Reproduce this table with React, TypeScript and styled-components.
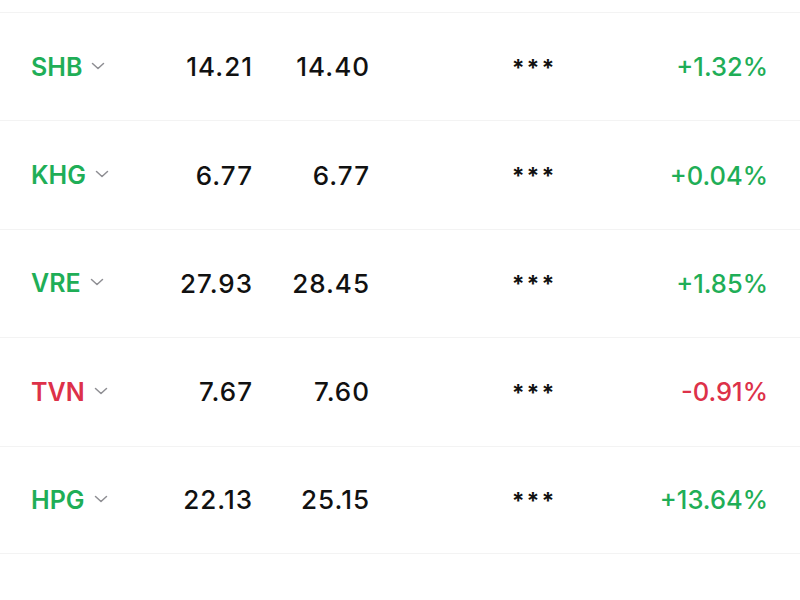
import * as React from "react";
import styled, {createGlobalStyle} from "styled-components";

const GlobalStyle = createGlobalStyle`
  html, body {
    margin: 0;
    background: #ffffff;
    font-family: Inter, "Noto Sans", "Liberation Sans", sans-serif;
  }
`;

const green = '#1fae57';
const red = '#dd3149';

interface Quote {
    symbol: string,
    open: string,
    close: string,
    change: number,
}

const quotes: Quote[] = [
    {symbol: 'SHB', open: '14.21', close: '14.40', change: 1.32},
    {symbol: 'KHG', open: '6.77', close: '6.77', change: 0.04},
    {symbol: 'VRE', open: '27.93', close: '28.45', change: 1.85},
    {symbol: 'TVN', open: '7.67', close: '7.60', change: -0.91},
    {symbol: 'HPG', open: '22.13', close: '25.15', change: 13.64},
];

const List = styled.div`
  padding-top: 12px;
`

const Row = styled.div`
  box-sizing: border-box;
  height: 108.4px;
  display: grid;
  grid-template-columns: 120px 101px 117px 330px minmax(0, 1fr);
  align-items: center;
  padding: 0 32px 0 31px;
  border-top: 1px solid #f3f3f3;

  &:last-child {
    border-bottom: 1px solid #f3f3f3;
  }
`

const Symbol = styled.div<{ $up: boolean }>`
  display: flex;
  align-items: center;
  gap: 9px;
  font-size: 25px;
  font-weight: 600;
  color: ${({$up}) => $up ? green : red};
`

const Price = styled.div`
  display: flex;
  justify-content: flex-end;
  font-size: 26px;
  font-weight: 500;
  letter-spacing: 1px;
  color: #111111;
  white-space: nowrap;
  margin-right: -1px;
`

const Hidden = styled.div`
  text-align: center;
  font-size: 23px;
  font-weight: 700;
  color: #111111;
  letter-spacing: 2px;
  position: relative;
  top: 1px;
`

const Change = styled.div<{ $up: boolean }>`
  display: flex;
  justify-content: flex-end;
  white-space: nowrap;
  font-size: 25.5px;
  font-weight: 500;
  color: ${({$up}) => $up ? green : red};
`

const Chevron = () => (
    <svg width="14" height="8" viewBox="0 0 14 8" fill="none" style={{marginTop: -2}}>
        <path d="M1.5 1.5 L7 6.5 L12.5 1.5" stroke="#8e8e93" strokeWidth="1.5" strokeLinecap="round" strokeLinejoin="round"/>
    </svg>
);

const formatChange = (v: number) => (v >= 0 ? '+' : '') + v.toFixed(2) + '%';

export default function App() {
    return <>
        <GlobalStyle/>
        <List>
            {quotes.map(q => {
                const up = q.change >= 0;
                return <Row key={q.symbol}>
                    <Symbol $up={up}>{q.symbol}<Chevron/></Symbol>
                    <Price>{q.open}</Price>
                    <Price>{q.close}</Price>
                    <Hidden>***</Hidden>
                    <Change $up={up}>{formatChange(q.change)}</Change>
                </Row>
            })}
        </List>
    </>
}
